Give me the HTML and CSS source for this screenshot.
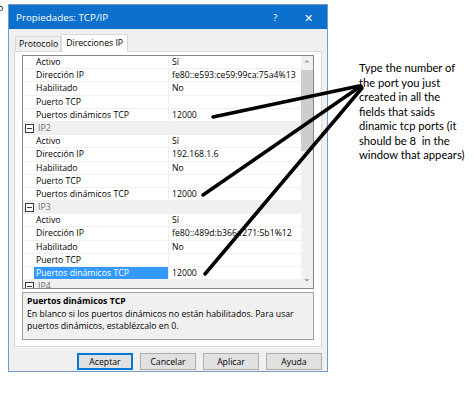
FILE: index.html
```html
<!DOCTYPE html>
<html lang="es">
<head>
    <meta charset="UTF-8">
    <title>Propiedades: TCP/IP</title>
    <link rel="stylesheet" href="styles.css">
</head>
<body>

<span class="stray">o</span>

<div class="page">
    <div class="window">
        <div class="titlebar">
            <span class="title">Propiedades: TCP/IP</span>
            <span class="help">?</span>
            <span class="close">&#x2715;</span>
        </div>

        <div class="win-body">
            <div class="tabs">
                <div class="tab">Protocolo</div>
                <div class="tab active">Direcciones IP</div>
            </div>

            <div class="tab-panel">
                <div class="grid">
                    <div class="rows">
                        <div class="row"><span class="name">Activo</span><span class="value">Sí</span></div>
                        <div class="row"><span class="name">Dirección IP</span><span class="value">fe80::e593:ce59:99ca:75a4%13</span></div>
                        <div class="row"><span class="name">Habilitado</span><span class="value">No</span></div>
                        <div class="row"><span class="name">Puerto TCP</span><span class="value"></span></div>
                        <div class="row"><span class="name">Puertos dinámicos TCP</span><span class="value">12000</span></div>

                        <div class="row category"><span class="toggle"></span><span class="cat-name">IP2</span></div>
                        <div class="row"><span class="name">Activo</span><span class="value">Sí</span></div>
                        <div class="row"><span class="name">Dirección IP</span><span class="value">192.168.1.6</span></div>
                        <div class="row"><span class="name">Habilitado</span><span class="value">No</span></div>
                        <div class="row"><span class="name">Puerto TCP</span><span class="value"></span></div>
                        <div class="row"><span class="name">Puertos dinámicos TCP</span><span class="value">12000</span></div>

                        <div class="row category"><span class="toggle"></span><span class="cat-name">IP3</span></div>
                        <div class="row"><span class="name">Activo</span><span class="value">Sí</span></div>
                        <div class="row"><span class="name">Dirección IP</span><span class="value">fe80::489d:b366:f271:5b1%12</span></div>
                        <div class="row"><span class="name">Habilitado</span><span class="value">No</span></div>
                        <div class="row"><span class="name">Puerto TCP</span><span class="value"></span></div>
                        <div class="row selected"><span class="name">Puertos dinámicos TCP</span><span class="value">12000</span></div>

                        <div class="row category"><span class="toggle"></span><span class="cat-name">IP4</span></div>
                    </div>
                    <div class="scrollbar">
                        <div class="arrow">&#x2303;</div>
                        <div class="thumb"></div>
                        <div class="track"></div>
                        <div class="arrow down">&#x2304;</div>
                    </div>
                </div>

                <div class="description">
                    <div class="desc-title">Puertos dinámicos TCP</div>
                    <div class="desc-text">En blanco si los puertos dinámicos no están habilitados. Para usar puertos dinámicos, establézcalo en 0.</div>
                </div>
            </div>

            <div class="buttons">
                <button class="default">Aceptar</button>
                <button>Cancelar</button>
                <button>Aplicar</button>
                <button>Ayuda</button>
            </div>
        </div>
    </div>

    <p class="note">Type the number of<br>the port you just<br>created in all the<br>fields that saids<br>dinamic tcp ports (it<br>should be 8&nbsp; in the<br>window that appears)</p>
</div>

<!-- trazos a mano encima de la captura -->
<svg class="strokes" width="474" height="396" viewBox="0 0 474 396">
    <line x1="213" y1="117" x2="359" y2="86" />
    <line x1="203" y1="195" x2="361" y2="86" />
    <line x1="205" y1="274" x2="362" y2="88" />
</svg>

</body>
</html>
```

FILE: styles.css
```css
body {
    margin: 0;
    background-color: #ffffff;
    font-family: "Open Sans", "Noto Sans", sans-serif;
    font-size: 8.7px;
    color: #000000;
    position: relative;
    width: 474px;
    height: 396px;
    overflow: hidden;
}

.stray {
    position: absolute;
    left: -2px;
    top: 1px;
    font-size: 9px;
}

.page {
    display: flex;
    align-items: flex-start;
    padding: 4px 0 0 8px;
}

.window {
    width: 318px;
    height: 366px;
    border: 1px solid #6f9ccb;
    background-color: #f0f0f0;
    display: flex;
    flex-direction: column;
}

.titlebar {
    height: 24px;
    background-color: #0c70cd;
    color: #ffffff;
    display: flex;
    align-items: center;
    padding: 0 0 0 7px;
    font-size: 9.8px;
}

.title {
    flex-grow: 1;
}

.help {
    width: 20px;
    text-align: center;
    margin-right: 13px;
}

.close {
    width: 20px;
    text-align: center;
    margin-right: 9px;
    font-size: 11px;
}

.win-body {
    padding: 5px 5px 0 5px;
    display: flex;
    flex-direction: column;
}

.tabs {
    display: flex;
    align-items: flex-end;
    height: 17px;
    padding-left: 1px;
}

.tab {
    height: 14px;
    line-height: 14px;
    padding: 0 2px 0 3px;
    border: 1px solid #d9d9d9;
    border-bottom: none;
    background-color: #f0f0f0;
}

.tab.active {
    height: 17px;
    line-height: 16px;
    padding: 0 4px;
    background-color: #ffffff;
    margin-bottom: -1px;
    position: relative;
}

.tab-panel {
    height: 291px;
    border: 1px solid #d9d9d9;
    background-color: #ffffff;
    padding: 3px 7px 0 7px;
}

.grid {
    height: 232px;
    border: 1px solid #828790;
    display: flex;
    overflow: hidden;
}

.rows {
    flex-grow: 1;
    display: flex;
    flex-direction: column;
}

.row {
    flex: 0 0 13.2px;
    display: flex;
    align-items: stretch;
    border-bottom: 1px solid #f0f0f0;
    box-sizing: border-box;
    padding-left: 11px;
    line-height: 12px;
    white-space: nowrap;
}

.name {
    width: 132px;
    padding-left: 2px;
    border-right: 1px solid #f0f0f0;
}

.value {
    padding-left: 3px;
    overflow: hidden;
}

.row.selected .name {
    background-color: #3399ff;
    color: #ffffff;
}

.row.category {
    background-color: #f0f0f0;
    color: #6d6d6d;
    padding-left: 2px;
    align-items: center;
}

.toggle {
    width: 7px;
    height: 7px;
    border: 1px solid #3c3c3c;
    background-color: #ffffff;
    position: relative;
    margin-right: 4px;
}

.toggle::after {
    content: "";
    position: absolute;
    left: 1px;
    right: 1px;
    top: 3px;
    height: 1px;
    background-color: #3c3c3c;
}

.scrollbar {
    width: 12px;
    background-color: #f0f0f0;
    display: flex;
    flex-direction: column;
}

.arrow {
    height: 14px;
    text-align: center;
    font-size: 9px;
    line-height: 16px;
    color: #606060;
}

.arrow.down {
    line-height: 8px;
}

.thumb {
    height: 81px;
    background-color: #cdcdcd;
}

.track {
    flex-grow: 1;
}

.description {
    margin-top: 3px;
    height: 42px;
    border: 1px solid #a0a0a0;
    background-color: #f0f0f0;
    padding: 2px 4px;
    line-height: 12.5px;
}

.desc-title {
    font-weight: bold;
}

.buttons {
    display: flex;
    justify-content: flex-end;
    gap: 7px;
    margin-top: 6px;
}

button {
    width: 56px;
    height: 17px;
    padding: 0;
    border: 1px solid #adadad;
    background-color: #e1e1e1;
    font-family: "Open Sans", "Noto Sans", sans-serif;
    font-size: 8.7px;
    color: #000000;
}

button.default {
    border: 2px solid #0078d7;
}

.note {
    margin: 57px 0 0 31px;
    white-space: nowrap;
    font-family: Lato, "Liberation Sans", sans-serif;
    font-size: 11.2px;
    line-height: 14.5px;
    color: #000000;
}

.strokes {
    position: absolute;
    left: 0;
    top: 0;
    pointer-events: none;
}

.strokes line {
    stroke: #000000;
    stroke-width: 3.5;
    stroke-linecap: round;
}
```
